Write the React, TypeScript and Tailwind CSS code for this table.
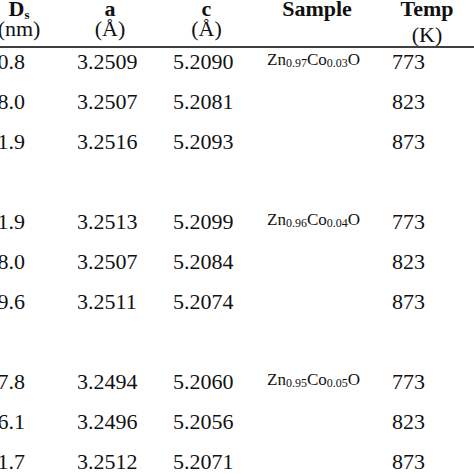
import React from "react";

type Row = { d: string; a: string; c: string; sample?: [string, string]; t: string };

const groups: Row[][] = [
  [
    { d: "20.8", a: "3.2509", c: "5.2090", sample: ["0.97", "0.03"], t: "773" },
    { d: "28.0", a: "3.2507", c: "5.2081", t: "823" },
    { d: "21.9", a: "3.2516", c: "5.2093", t: "873" },
  ],
  [
    { d: "21.9", a: "3.2513", c: "5.2099", sample: ["0.96", "0.04"], t: "773" },
    { d: "28.0", a: "3.2507", c: "5.2084", t: "823" },
    { d: "29.6", a: "3.2511", c: "5.2074", t: "873" },
  ],
  [
    { d: "27.8", a: "3.2494", c: "5.2060", sample: ["0.95", "0.05"], t: "773" },
    { d: "26.1", a: "3.2496", c: "5.2056", t: "823" },
    { d: "21.7", a: "3.2512", c: "5.2071", t: "873" },
  ],
];

function DataRow({ r }: { r: Row }) {
  return (
    <div className="flex h-[40px] text-[22px] leading-[28px] whitespace-nowrap">
      <div className="flex w-[25px] shrink-0 justify-end">
        <span>{r.d}</span>
      </div>
      <div className="ml-[52px] w-[96px] shrink-0">{r.a}</div>
      <div className="w-[94px] shrink-0">{r.c}</div>
      <div className="w-[125px] shrink-0 pt-[2px] text-[17px] leading-[20px]">
        {r.sample ? (
          <span>
            Zn<span className="text-[12px] leading-none align-[-2px]">{r.sample[0]}</span>
            Co<span className="text-[12px] leading-none align-[-2px]">{r.sample[1]}</span>O
          </span>
        ) : null}
      </div>
      <div className="shrink-0">{r.t}</div>
    </div>
  );
}

export default function App() {
  return (
    <div
      className="relative h-[474px] w-[474px] overflow-hidden bg-white text-[#111]"
      style={{ fontFamily: '"Liberation Serif", "Times New Roman", serif' }}
    >
      {/* header */}
      <div className="flex h-[46px] text-[22px] whitespace-nowrap">
        <div className="flex w-[38px] shrink-0 flex-col items-center">
          <div className="h-[17px] font-bold leading-[18px]">
            D<span className="text-[13px] leading-none align-[-3px]">s</span>
          </div>
          <div className="leading-[23px]">(nm)</div>
        </div>
        <div className="flex w-[144px] shrink-0 flex-col items-center">
          <div className="h-[17px] font-bold leading-[18px]">a</div>
          <div className="leading-[23px]">(Å)</div>
        </div>
        <div className="flex w-[49px] shrink-0 flex-col items-center">
          <div className="h-[17px] font-bold leading-[18px]">c</div>
          <div className="leading-[23px]">(Å)</div>
        </div>
        <div className="flex w-[172px] shrink-0 flex-col items-center">
          <div className="h-[17px] font-bold leading-[18px]">Sample</div>
        </div>
        <div className="flex w-[48px] shrink-0 flex-col items-center">
          <div className="h-[17px] font-bold leading-[18px]">Temp</div>
          <div className="mt-[6px] leading-[23px]">(K)</div>
        </div>
      </div>
      <div className="h-[2px] w-full bg-[#3f3f3f]" />
      {/* body */}
      <div className="flex flex-col">
        {groups.map((g, gi) => (
          <div key={gi} className={gi > 0 ? "mt-[40px] flex flex-col" : "flex flex-col"}>
            {g.map((r, ri) => (
              <DataRow key={ri} r={r} />
            ))}
          </div>
        ))}
      </div>
    </div>
  );
}
